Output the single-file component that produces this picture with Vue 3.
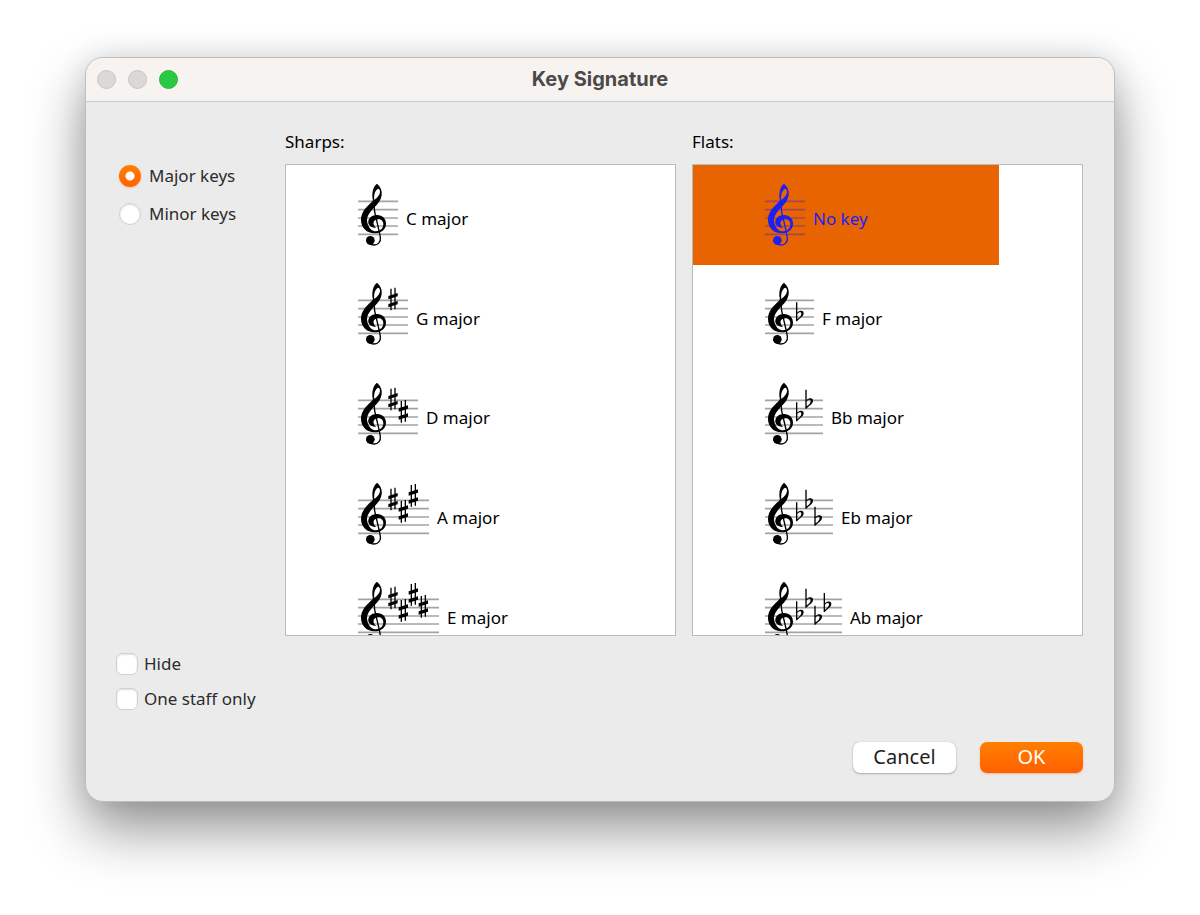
<template>
  <div class="desktop">
    <form class="window" @submit.prevent>
      <header class="title-bar">
        <div class="lights">
          <span class="light"></span>
          <span class="light"></span>
          <span class="light green"></span>
        </div>
        <h1>Key Signature</h1>
      </header>

      <div class="content">
        <div class="keys">
          <div class="modes">
            <label v-for="m in modes" :key="m.value" class="option">
              <input v-model="mode" type="radio" name="mode" :value="m.value">
              <span>{{ m.label }}</span>
            </label>
          </div>

          <section v-for="list in lists" :key="list.title" class="column">
            <h2>{{ list.title }}</h2>
            <ul class="key-list">
              <li v-for="(name, n) in list.names" :key="name">
                <button
                  type="button"
                  class="key"
                  :class="{ selected: selected === name }"
                  @click="selected = name"
                >
                  <svg
                    class="staff"
                    :width="staffWidth(list, n)"
                    height="64"
                    :viewBox="`54 39 ${staffWidth(list, n) * 3} 192`"
                  >
                    <path
                      v-for="y in staffLines"
                      :key="y"
                      class="line"
                      :d="`M54 ${y}h${staffWidth(list, n) * 3}`"
                    />
                    <path :d="clef" fill-rule="evenodd" />
                    <path class="stem" d="M101 90L104 126L118 186L121 202C123 216 114 225 102 225C91 225 83 220 80 211" />
                    <circle cx="91" cy="211" r="13" />
                    <path
                      v-for="(spot, i) in list.spots.slice(0, n)"
                      :key="i"
                      :d="list.shape"
                      :transform="`translate(${spot[0]} ${spot[1]})`"
                    />
                  </svg>
                  <span>{{ name }}</span>
                </button>
              </li>
            </ul>
          </section>
        </div>

        <div class="checks">
          <label class="option">
            <input v-model="hide" type="checkbox">
            <span>Hide</span>
          </label>
          <label class="option">
            <input v-model="oneStaff" type="checkbox">
            <span>One staff only</span>
          </label>
        </div>

        <footer class="actions">
          <button type="button" class="action">Cancel</button>
          <button type="submit" class="action primary">OK</button>
        </footer>
      </div>
    </form>
  </div>
</template>

<script setup>
import { ref } from 'vue';

const mode = ref('major');
const selected = ref('No key');
const hide = ref(false);
const oneStaff = ref(false);

const modes = [
  { value: 'major', label: 'Major keys' },
  { value: 'minor', label: 'Minor keys' },
];

const staffLines = [94, 119, 144, 168, 193];

const clef = 'M111 41C122 50 127 62 125 76C121 100 104 109 91 126C82 138 79 147 82 158C86 175 97 184 108 184C121 184 130 175 130 163C130 152 122 147 114 148C105 149 99 155 101 162C102 168 105 171 109 174C92 174 83 164 85 154C87 141 99 135 111 135C128 135 138 147 138 161C138 178 123 190 104 190C80 190 63 173 63 150C63 128 78 112 92 99C99 93 99 92 98 87C95 69 99 50 111 41zM114 56C105 61 101 74 103 90C113 82 120 74 120 66C120 60 118 56 114 56z';

const sharp = 'M-8 -31h4v65h-4zM4 -34h4v65h-4zM-14 -9L14 -18V-8L-14 1zM-14 15L14 6V16L-14 25z';
const flat = 'M-2 0H2V31C8 24 21 23 21 33C21 43 8 48 1 57H-2zM2 35V50C8 46 14 40 14 34C14 28 6 29 2 35z';

// spots are the positions of the accidentals in staff units
const lists = [
  {
    title: 'Sharps:',
    shape: sharp,
    step: 10.2,
    names: ['C major', 'G major', 'D major', 'A major', 'E major'],
    spots: [[159, 90], [190, 127], [220, 79], [250, 115]],
  },
  {
    title: 'Flats:',
    shape: flat,
    step: 9.2,
    names: ['No key', 'F major', 'Bb major', 'Eb major', 'Ab major'],
    spots: [[149, 100], [177, 62], [204, 113], [232, 75]],
  },
];

function staffWidth(list, n) {
  return Math.round(40 + n * list.step);
}
</script>

<style>
body {
  margin: 0;
  background: #fff;
}
</style>

<style scoped>
.desktop {
  padding: 57px 85px 112px;
  font-family: "Noto Sans", "Open Sans", sans-serif;
  font-size: 17px;
  color: #2b2b2b;
}

.window {
  overflow: hidden;
  border: 1px solid #bdbdbd;
  border-radius: 18px;
  background: #ebebeb;
  box-shadow: 0 28px 56px rgba(0, 0, 0, 0.42), 0 0 28px rgba(0, 0, 0, 0.1);
}

.title-bar {
  display: grid;
  grid-template-columns: 1fr auto 1fr;
  align-items: center;
  height: 43px;
  padding: 0 11px;
  border-bottom: 1px solid #c9c8c7;
  background: #f7f3f0;
}

.lights {
  display: flex;
  gap: 12px;
}

.light {
  box-sizing: border-box;
  width: 19px;
  height: 19px;
  border: 1px solid #c8c4c1;
  border-radius: 50%;
  background: #dcd8d5;
}

.light.green {
  border-color: #24b83b;
  background: #29c941;
}

h1 {
  margin: 0;
  padding-bottom: 2px;
  font: 700 20px/24px Inter, sans-serif;
  color: #4b4a49;
}

.content {
  padding: 28px 31px 28px 30px;
}

.keys {
  display: grid;
  grid-template-columns: 153px 1fr 1fr;
  gap: 16px;
}

.modes {
  display: flex;
  flex-direction: column;
  gap: 14px;
  padding: 34px 0 0 3px;
}

.option {
  display: flex;
  align-items: center;
  gap: 8px;
  line-height: 24px;
}

.option input {
  appearance: none;
  box-sizing: border-box;
  flex: none;
  width: 22px;
  height: 22px;
  margin: 0;
  border: 1px solid #d0d0d0;
  background: #fff;
  box-shadow: inset 0 1px 2px rgba(0, 0, 0, 0.12);
}

.option input[type="radio"] {
  border-radius: 50%;
}

.option input[type="checkbox"] {
  border-radius: 6px;
}

.option input[type="radio"]:checked {
  border: none;
  background: radial-gradient(circle, #fff 4px, transparent 5px), linear-gradient(#ff8000, #ff6200);
  box-shadow: 0 1px 2px rgba(255, 98, 0, 0.3);
}

.option input[type="checkbox"]:checked {
  background: #ff7200;
}

h2 {
  margin: 0 0 10px;
  font-size: 17px;
  font-weight: 400;
  line-height: 24px;
  color: #000;
}

.key-list {
  height: 470px;
  margin: 0;
  padding: 0;
  overflow: hidden;
  border: 1px solid #b9bbba;
  background: #fff;
  list-style: none;
}

.key-list li {
  display: flex;
  height: calc(498px / 5);
}

.key {
  display: flex;
  align-items: center;
  gap: 8px;
  width: 306px;
  padding: 0 0 0 72px;
  border: none;
  background: none;
  font: inherit;
  color: #000;
}

.key.selected {
  background: #e86400;
  color: #1f1ff0;
}

.key span {
  padding-top: 8px;
}

.staff {
  display: block;
  fill: currentColor;
}

.line {
  fill: none;
  stroke: currentColor;
  stroke-width: 5;
  opacity: 0.36;
}

.stem {
  fill: none;
  stroke: currentColor;
  stroke-width: 4;
}

.checks {
  display: flex;
  flex-direction: column;
  gap: 11px;
  padding-top: 16px;
}

.checks .option {
  gap: 6px;
}

.actions {
  display: flex;
  justify-content: flex-end;
  gap: 24px;
  padding-top: 31px;
}

.action {
  width: 103px;
  height: 31px;
  padding: 0 0 2px;
  border: none;
  border-radius: 7px;
  background: #fff;
  box-shadow: 0 0 1px rgba(0, 0, 0, 0.3), 0 1px 2px rgba(0, 0, 0, 0.25);
  font: inherit;
  font-size: 20px;
  line-height: 28px;
  color: #222;
}

.action.primary {
  background: linear-gradient(#ff7f00, #ff6000);
  box-shadow: 0 1px 2px rgba(255, 96, 0, 0.35);
  color: #fff;
}
</style>
